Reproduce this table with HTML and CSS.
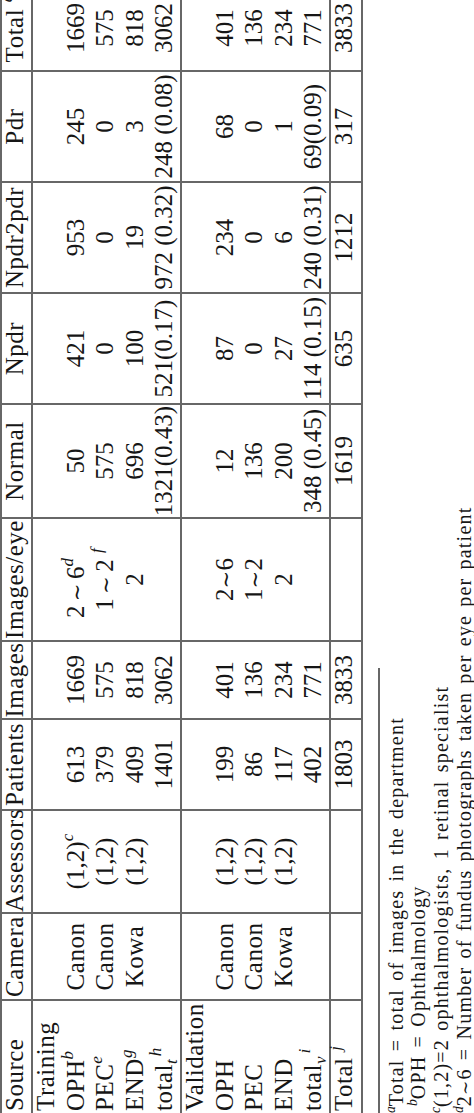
FILE: index.html
```html
<!DOCTYPE html>
<html lang="en">
<head>
<meta charset="utf-8">
<title>Dataset table</title>
<link rel="stylesheet" href="styles.css">
</head>
<body>
<div class="page">
  <div class="rot">
    <table class="tbl">
      <colgroup>
        <col class="c-src"><col class="c-cam"><col class="c-ass"><col class="c-pat"><col class="c-img"><col class="c-ipe"><col class="c-nor"><col class="c-npd"><col class="c-n2p"><col class="c-pdr"><col class="c-tot">
      </colgroup>
      <thead>
        <tr class="hd">
          <th class="src">Source</th><th>Camera</th><th>Assessors</th><th>Patients</th><th>Images</th><th>Images/eye</th><th>Normal</th><th>Npdr</th><th>Npdr2pdr</th><th>Pdr</th><th>Total <sup>a</sup></th>
        </tr>
      </thead>
      <tbody>
        <tr><td class="src">Training</td><td></td><td></td><td></td><td></td><td></td><td></td><td></td><td></td><td></td><td></td></tr>
        <tr><td class="src">OPH<sup>b</sup></td><td class="txt">Canon</td><td>(1,2)<sup>c</sup></td><td>613</td><td>1669</td><td class="ipe-d">2<span class="sim rel">∼</span>6<sup>d</sup></td><td>50</td><td>421</td><td>953</td><td>245</td><td>1669</td></tr>
        <tr><td class="src">PEC<sup>e</sup></td><td class="txt">Canon</td><td>(1,2)</td><td>379</td><td>575</td><td>1<span class="sim rel">∼</span>2 <sup>f</sup></td><td>575</td><td>0</td><td>0</td><td>0</td><td>575</td></tr>
        <tr><td class="src">END<sup>g</sup></td><td class="txt">Kowa</td><td>(1,2)</td><td>409</td><td>818</td><td>2</td><td>696</td><td>100</td><td>19</td><td>3</td><td>818</td></tr>
        <tr class="grp-end"><td class="src">total<sub>t</sub><sup class="after">h</sup></td><td></td><td></td><td>1401</td><td>3062</td><td></td><td>1321(0.43)</td><td>521(0.17)</td><td>972 (0.32)</td><td>248 (0.08)</td><td>3062</td></tr>
        <tr><td class="src">Validation</td><td></td><td></td><td></td><td></td><td></td><td></td><td></td><td></td><td></td><td></td></tr>
        <tr><td class="src">OPH</td><td class="txt">Canon</td><td>(1,2)</td><td>199</td><td>401</td><td>2<span class="sim">∼</span>6</td><td>12</td><td>87</td><td>234</td><td>68</td><td>401</td></tr>
        <tr><td class="src">PEC</td><td class="txt">Canon</td><td>(1,2)</td><td>86</td><td>136</td><td>1<span class="sim">∼</span>2</td><td>136</td><td>0</td><td>0</td><td>0</td><td>136</td></tr>
        <tr><td class="src">END</td><td class="txt">Kowa</td><td>(1,2)</td><td>117</td><td>234</td><td>2</td><td>200</td><td>27</td><td>6</td><td>1</td><td>234</td></tr>
        <tr class="grp-end"><td class="src">total<sub>v</sub><sup class="after">i</sup></td><td></td><td></td><td>402</td><td>771</td><td></td><td>348 (0.45)</td><td>114 (0.15)</td><td>240 (0.31)</td><td>69(0.09)</td><td>771</td></tr>
        <tr class="last"><td class="src">Total <sup>j</sup></td><td></td><td></td><td>1803</td><td>3833</td><td></td><td>1619</td><td>635</td><td>1212</td><td>317</td><td>3833</td></tr>
      </tbody>
    </table>
    <div class="notes">
      <div class="rule"></div>
      <p class="note"><sup>a</sup>Total = total of images in the department</p>
      <p class="note ind"><sup>b</sup>OPH = Ophthalmology</p>
      <p class="note"><sup>c</sup>(1,2)=2 ophthalmologists, 1 retinal specialist</p>
      <p class="note"><sup>d</sup>2<span class="sim">∼</span>6 = Number of fundus photographs taken per eye per patient</p>
    </div>
  </div>
</div>
</body>
</html>
```
FILE: styles.css
```css
html, body {
  margin: 0;
  padding: 0;
  background: #ffffff;
}

body {
  width: 474px;
  height: 1113px;
  overflow: hidden;
}

.page {
  width: 474px;
  height: 1113px;
  overflow: hidden;
}

.rot {
  width: 1113px;
  height: 474px;
  transform-origin: 0 0;
  transform: translateY(1113px) rotate(-90deg);
  font-family: "Liberation Serif", "Times New Roman", serif;
  color: #161616;
}

.tbl {
  margin-left: -5px;
  margin-top: -2px;
  width: 1130px;
  table-layout: fixed;
  border-collapse: collapse;
  font-size: 25px;
  border-top: 2px solid #676767;
  border-bottom: 2px solid #676767;
}

.c-src { width: 115px; }
.c-cam { width: 87px; }
.c-ass { width: 103px; }
.c-pat { width: 91px; }
.c-img { width: 78px; }
.c-ipe { width: 123px; }
.c-nor { width: 114px; }
.c-npd { width: 111px; }
.c-n2p { width: 111px; }
.c-pdr { width: 111px; }
.c-tot { width: 86px; }

.tbl th,
.tbl td {
  padding: 0 0 2.6px 0;
  line-height: 26.8px;
  vertical-align: top;
  text-align: center;
  white-space: nowrap;
  font-weight: normal;
  border-left: 2px solid #676767;
  border-right: 2px solid #676767;
}

.tbl th {
  letter-spacing: 0.5px;
}

.hd th {
  border-bottom: 2px solid #676767;
}

.grp-end td {
  border-bottom: 2px solid #676767;
}

.tbl .src {
  text-align: left;
  padding-left: 3px;
  letter-spacing: 0.5px;
}

.tbl .txt {
  letter-spacing: 0.5px;
}

.tbl .ipe-d {
  padding-right: 17px;
}

sup,
sub {
  font-size: 0.68em;
  font-style: italic;
  line-height: 0;
  letter-spacing: 0;
}

sup {
  vertical-align: 0.62em;
}

sub {
  vertical-align: -0.32em;
}

sup.after {
  margin-left: 3px;
}

.sim {
  font-family: "DejaVu Serif", serif;
  font-size: 0.85em;
  line-height: 0;
}

.sim.rel {
  margin: 0 0.2em;
}

.notes {
  margin-left: -2px;
}

.rule {
  width: 445px;
  border-top: 2px solid #676767;
  margin-top: 15px;
}

.note {
  margin: 0;
  font-size: 20px;
  line-height: 22.8px;
  letter-spacing: 1.2px;
  word-spacing: 2px;
  white-space: nowrap;
}

.note:first-of-type {
  margin-top: 5px;
}

.note.ind {
  padding-left: 7px;
}
```
